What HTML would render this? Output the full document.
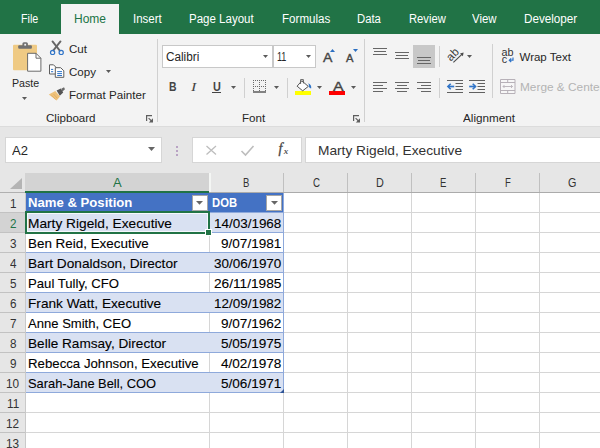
<!DOCTYPE html>
<html><head><meta charset="utf-8"><title>Excel</title>
<style>
html,body{margin:0;padding:0;}
body{width:600px;height:448px;overflow:hidden;position:relative;background:#fff;font-family:"Liberation Sans",sans-serif;}
#app{position:absolute;left:0;top:0;width:600px;height:448px;overflow:hidden;}
.c{-webkit-text-stroke:0.1px #000;}
.sb{-webkit-text-stroke:0.35px #444;}
.t{position:absolute;white-space:nowrap;transform-origin:0 0;display:block;}
</style></head><body><div id="app">
<div style="position:absolute;left:0px;top:0px;width:600px;height:34px;background:#217346;"></div>
<div style="position:absolute;left:61px;top:4px;width:58px;height:30px;background:#f3f3f3;"></div>
<div style="position:absolute;left:0px;top:34px;width:600px;height:92px;background:#f3f3f3;"></div>
<div style="position:absolute;left:0px;top:126px;width:600px;height:1px;background:#dcdcdc;"></div>
<div style="position:absolute;left:0px;top:127px;width:600px;height:46px;background:#e6e6e6;"></div>
<span class="t" style="left:20.70px;top:13.00px;font-size:12px;line-height:12px;color:#ffffff;transform:scaleX(0.8929);">File</span>
<span class="t" style="left:74.00px;top:13.00px;font-size:12px;line-height:12px;color:#217346;">Home</span>
<span class="t" style="left:133.30px;top:13.00px;font-size:12px;line-height:12px;color:#ffffff;transform:scaleX(0.9567);">Insert</span>
<span class="t" style="left:189.30px;top:13.00px;font-size:12px;line-height:12px;color:#ffffff;transform:scaleX(0.9603);">Page Layout</span>
<span class="t" style="left:281.70px;top:13.00px;font-size:12px;line-height:12px;color:#ffffff;transform:scaleX(0.9660);">Formulas</span>
<span class="t" style="left:357.30px;top:13.00px;font-size:12px;line-height:12px;color:#ffffff;transform:scaleX(0.9419);">Data</span>
<span class="t" style="left:408.50px;top:13.00px;font-size:12px;line-height:12px;color:#ffffff;transform:scaleX(0.9346);">Review</span>
<span class="t" style="left:472.20px;top:13.00px;font-size:12px;line-height:12px;color:#ffffff;transform:scaleX(0.9507);">View</span>
<span class="t" style="left:524.10px;top:13.00px;font-size:12px;line-height:12px;color:#ffffff;transform:scaleX(0.9735);">Developer</span>
<span class="t" style="left:68.75px;top:44.00px;font-size:11.5px;line-height:11.5px;color:#262626;transform:scaleX(1.0070);">Cut</span>
<span class="t" style="left:68.75px;top:67.00px;font-size:11.5px;line-height:11.5px;color:#262626;transform:scaleX(1.0047);">Copy</span>
<span class="t" style="left:69.00px;top:90.00px;font-size:11.5px;line-height:11.5px;color:#262626;transform:scaleX(1.0099);">Format Painter</span>
<span class="t" style="left:11.60px;top:78.00px;font-size:11.5px;line-height:11.5px;color:#262626;transform:scaleX(0.9260);">Paste</span>
<span class="t" style="left:45.70px;top:113.00px;font-size:11px;line-height:11px;color:#262626;transform:scaleX(1.0525);">Clipboard</span>
<svg style="position:absolute;left:22px;top:97px" width="5" height="3" viewBox="0 0 5 3"><path d="M0 0H5L2.5 3Z" fill="#5a5a5a"/></svg>
<svg style="position:absolute;left:106px;top:70px" width="5" height="3" viewBox="0 0 5 3"><path d="M0 0H5L2.5 3Z" fill="#5a5a5a"/></svg>
<div style="position:absolute;left:157px;top:39px;width:1px;height:83px;background:#d0d0d0;"></div>
<div style="position:absolute;left:364px;top:39px;width:1px;height:83px;background:#d0d0d0;"></div>
<div style="position:absolute;left:162px;top:45px;width:111px;height:23px;background:#fff;border:1px solid #c8c8c8;box-sizing:border-box;"></div>
<div style="position:absolute;left:273px;top:45px;width:43px;height:23px;background:#fff;border:1px solid #c8c8c8;box-sizing:border-box;"></div>
<span class="t" style="left:165.50px;top:51.00px;font-size:12px;line-height:12px;color:#262626;transform:scaleX(0.9779);">Calibri</span>
<span class="t" style="left:277.20px;top:51.00px;font-size:12px;line-height:12px;color:#262626;transform:scaleX(0.7520);">11</span>
<svg style="position:absolute;left:263px;top:55px" width="5" height="3" viewBox="0 0 5 3"><path d="M0 0H5L2.5 3Z" fill="#5a5a5a"/></svg>
<svg style="position:absolute;left:306px;top:55px" width="5" height="3" viewBox="0 0 5 3"><path d="M0 0H5L2.5 3Z" fill="#5a5a5a"/></svg>
<span class="t" style="left:168.60px;top:81.00px;font-size:12.5px;line-height:12.5px;color:#444;font-weight:bold;transform:scaleX(0.8333);">B</span>
<span class="t" style="left:191.15px;top:80.00px;font-size:13.5px;line-height:13.5px;color:#444;font-style:italic;font-family:'Liberation Serif',serif;transform:scaleX(1.1810);">I</span>
<span class="t" style="left:212.60px;top:81.00px;font-size:12px;line-height:12px;color:#444;font-weight:bold;transform:scaleX(0.9043);">U</span>
<div style="position:absolute;left:212px;top:91.5px;width:9px;height:1px;background:#444;"></div>
<svg style="position:absolute;left:231px;top:86px" width="5" height="3" viewBox="0 0 5 3"><path d="M0 0H5L2.5 3Z" fill="#5a5a5a"/></svg>
<div style="position:absolute;left:244px;top:78px;width:1px;height:20px;background:#d0d0d0;"></div>
<div style="position:absolute;left:287px;top:78px;width:1px;height:20px;background:#d0d0d0;"></div>
<svg style="position:absolute;left:274px;top:86px" width="5" height="3" viewBox="0 0 5 3"><path d="M0 0H5L2.5 3Z" fill="#5a5a5a"/></svg>
<svg style="position:absolute;left:317px;top:86px" width="5" height="3" viewBox="0 0 5 3"><path d="M0 0H5L2.5 3Z" fill="#5a5a5a"/></svg>
<svg style="position:absolute;left:351.3px;top:86px" width="5" height="3" viewBox="0 0 5 3"><path d="M0 0H5L2.5 3Z" fill="#5a5a5a"/></svg>
<span class="t" style="left:241.50px;top:113.00px;font-size:11px;line-height:11px;color:#262626;transform:scaleX(1.0545);">Font</span>
<span class="t" style="left:462.50px;top:113.00px;font-size:11px;line-height:11px;color:#262626;transform:scaleX(1.0639);">Alignment</span>
<div style="position:absolute;left:295px;top:91px;width:16px;height:4px;background:#ffff00;"></div>
<div style="position:absolute;left:329px;top:91px;width:16px;height:4px;background:#ff0000;"></div>
<span class="t sb" style="left:332.60px;top:80.00px;font-size:13.5px;line-height:13.5px;color:#444;transform:scaleX(1.1778);">A</span>
<span class="t sb" style="left:322.50px;top:51.00px;font-size:13px;line-height:13px;color:#444;transform:scaleX(1.0857);">A</span>
<span class="t sb" style="left:345.75px;top:53.00px;font-size:10.5px;line-height:10.5px;color:#444;transform:scaleX(1.0643);">A</span>
<svg style="position:absolute;left:330px;top:48.5px" width="5" height="3" viewBox="0 0 5 3"><path d="M0 3H5L2.5 0Z" fill="#2b6fc2"/></svg>
<svg style="position:absolute;left:353px;top:48.5px" width="5" height="3" viewBox="0 0 5 3"><path d="M0 0H5L2.5 3Z" fill="#2b6fc2"/></svg>
<div style="position:absolute;left:373px;top:48px;width:14px;height:1px;background:#666;"></div>
<div style="position:absolute;left:374px;top:51px;width:12px;height:1px;background:#666;"></div>
<div style="position:absolute;left:373px;top:54px;width:14px;height:1px;background:#666;"></div>
<div style="position:absolute;left:395px;top:52px;width:14px;height:1px;background:#666;"></div>
<div style="position:absolute;left:396px;top:55px;width:12px;height:1px;background:#666;"></div>
<div style="position:absolute;left:395px;top:58px;width:14px;height:1px;background:#666;"></div>
<div style="position:absolute;left:413px;top:45px;width:22px;height:23px;background:#c8c8c8;"></div>
<div style="position:absolute;left:417px;top:57px;width:14px;height:1px;background:#666;"></div>
<div style="position:absolute;left:418px;top:60px;width:12px;height:1px;background:#666;"></div>
<div style="position:absolute;left:417px;top:63px;width:14px;height:1px;background:#666;"></div>
<div style="position:absolute;left:373px;top:82px;width:14px;height:1px;background:#666;"></div>
<div style="position:absolute;left:373px;top:85px;width:10px;height:1px;background:#666;"></div>
<div style="position:absolute;left:373px;top:88px;width:14px;height:1px;background:#666;"></div>
<div style="position:absolute;left:373px;top:91px;width:10px;height:1px;background:#666;"></div>
<div style="position:absolute;left:395px;top:82px;width:14px;height:1px;background:#666;"></div>
<div style="position:absolute;left:397px;top:85px;width:10px;height:1px;background:#666;"></div>
<div style="position:absolute;left:395px;top:88px;width:14px;height:1px;background:#666;"></div>
<div style="position:absolute;left:397px;top:91px;width:10px;height:1px;background:#666;"></div>
<div style="position:absolute;left:417px;top:82px;width:14px;height:1px;background:#666;"></div>
<div style="position:absolute;left:421px;top:85px;width:10px;height:1px;background:#666;"></div>
<div style="position:absolute;left:417px;top:88px;width:14px;height:1px;background:#666;"></div>
<div style="position:absolute;left:421px;top:91px;width:10px;height:1px;background:#666;"></div>
<div style="position:absolute;left:439px;top:46px;width:1px;height:21px;background:#d0d0d0;"></div>
<div style="position:absolute;left:439px;top:78px;width:1px;height:20px;background:#d0d0d0;"></div>
<div style="position:absolute;left:492px;top:44px;width:1px;height:54px;background:#d0d0d0;"></div>
<svg style="position:absolute;left:467px;top:55px" width="5" height="3" viewBox="0 0 5 3"><path d="M0 0H5L2.5 3Z" fill="#5a5a5a"/></svg>
<span class="t" style="left:519.50px;top:52.00px;font-size:11.5px;line-height:11.5px;color:#262626;">Wrap Text</span>
<span class="t" style="left:519.50px;top:82.00px;font-size:11.5px;line-height:11.5px;color:#b4b4b4;transform:scaleX(1.0293);">Merge &amp; Center</span>
<div style="position:absolute;left:5px;top:137px;width:157px;height:26px;background:#fff;border:1px solid #d6d6d6;box-sizing:border-box;"></div>
<div style="position:absolute;left:192px;top:137px;width:110px;height:26px;background:#fff;border:1px solid #d6d6d6;box-sizing:border-box;"></div>
<div style="position:absolute;left:305px;top:137px;width:300px;height:26px;background:#fff;border:1px solid #d6d6d6;box-sizing:border-box;"></div>
<span class="t" style="left:12.30px;top:145.00px;font-size:12px;line-height:12px;color:#262626;transform:scaleX(1.0872);">A2</span>
<svg style="position:absolute;left:147.8px;top:147px" width="7" height="4" viewBox="0 0 7 4"><path d="M0 0H7L3.5 4Z" fill="#666"/></svg>
<div style="position:absolute;left:176px;top:145.5px;width:2px;height:2px;background:#b9a3c4;"></div>
<div style="position:absolute;left:176px;top:149.5px;width:2px;height:2px;background:#b9a3c4;"></div>
<div style="position:absolute;left:176px;top:153.5px;width:2px;height:2px;background:#b9a3c4;"></div>
<span class="t" style="left:317.50px;top:144.00px;font-size:13px;line-height:13px;color:#333;transform:scaleX(1.0549);">Marty Rigeld, Executive</span>
<div style="position:absolute;left:0px;top:173px;width:600px;height:19px;background:#e6e6e6;"></div>
<div style="position:absolute;left:0px;top:192px;width:25px;height:256px;background:#e6e6e6;"></div>
<div style="position:absolute;left:26px;top:193px;width:574px;height:255px;background:#fff;"></div>
<div style="position:absolute;left:26px;top:192px;width:574px;height:1px;background:#ababab;"></div>
<div style="position:absolute;left:25px;top:173px;width:184px;height:19px;background:#d3d3d3;"></div>
<div style="position:absolute;left:25px;top:191px;width:184px;height:2px;background:#217346;"></div>
<div style="position:absolute;left:0px;top:192px;width:25px;height:1px;background:#b0b0b0;"></div>
<div style="position:absolute;left:0px;top:213px;width:25px;height:20px;background:#d3d3d3;"></div>
<div style="position:absolute;left:209px;top:193px;width:1px;height:255px;background:#d6d6d6;"></div>
<div style="position:absolute;left:283px;top:193px;width:1px;height:255px;background:#d6d6d6;"></div>
<div style="position:absolute;left:347px;top:193px;width:1px;height:255px;background:#d6d6d6;"></div>
<div style="position:absolute;left:411px;top:193px;width:1px;height:255px;background:#d6d6d6;"></div>
<div style="position:absolute;left:475px;top:193px;width:1px;height:255px;background:#d6d6d6;"></div>
<div style="position:absolute;left:539px;top:193px;width:1px;height:255px;background:#d6d6d6;"></div>
<div style="position:absolute;left:603px;top:193px;width:1px;height:255px;background:#d6d6d6;"></div>
<div style="position:absolute;left:26px;top:212px;width:574px;height:1px;background:#d6d6d6;"></div>
<div style="position:absolute;left:26px;top:232px;width:574px;height:1px;background:#d6d6d6;"></div>
<div style="position:absolute;left:26px;top:252px;width:574px;height:1px;background:#d6d6d6;"></div>
<div style="position:absolute;left:26px;top:272px;width:574px;height:1px;background:#d6d6d6;"></div>
<div style="position:absolute;left:26px;top:292px;width:574px;height:1px;background:#d6d6d6;"></div>
<div style="position:absolute;left:26px;top:312px;width:574px;height:1px;background:#d6d6d6;"></div>
<div style="position:absolute;left:26px;top:332px;width:574px;height:1px;background:#d6d6d6;"></div>
<div style="position:absolute;left:26px;top:352px;width:574px;height:1px;background:#d6d6d6;"></div>
<div style="position:absolute;left:26px;top:372px;width:574px;height:1px;background:#d6d6d6;"></div>
<div style="position:absolute;left:26px;top:392px;width:574px;height:1px;background:#d6d6d6;"></div>
<div style="position:absolute;left:26px;top:412px;width:574px;height:1px;background:#d6d6d6;"></div>
<div style="position:absolute;left:26px;top:432px;width:574px;height:1px;background:#d6d6d6;"></div>
<div style="position:absolute;left:26px;top:452px;width:574px;height:1px;background:#d6d6d6;"></div>
<div style="position:absolute;left:26px;top:472px;width:574px;height:1px;background:#d6d6d6;"></div>
<div style="position:absolute;left:283px;top:173px;width:1px;height:19px;background:#c0c0c0;"></div>
<div style="position:absolute;left:347px;top:173px;width:1px;height:19px;background:#c0c0c0;"></div>
<div style="position:absolute;left:411px;top:173px;width:1px;height:19px;background:#c0c0c0;"></div>
<div style="position:absolute;left:475px;top:173px;width:1px;height:19px;background:#c0c0c0;"></div>
<div style="position:absolute;left:539px;top:173px;width:1px;height:19px;background:#c0c0c0;"></div>
<div style="position:absolute;left:209px;top:173px;width:2px;height:19px;background:#f4f6f4;"></div>
<div style="position:absolute;left:0px;top:212px;width:25px;height:1px;background:#c2c2c2;"></div>
<div style="position:absolute;left:0px;top:232px;width:25px;height:1px;background:#c2c2c2;"></div>
<div style="position:absolute;left:0px;top:252px;width:25px;height:1px;background:#c2c2c2;"></div>
<div style="position:absolute;left:0px;top:272px;width:25px;height:1px;background:#c2c2c2;"></div>
<div style="position:absolute;left:0px;top:292px;width:25px;height:1px;background:#c2c2c2;"></div>
<div style="position:absolute;left:0px;top:312px;width:25px;height:1px;background:#c2c2c2;"></div>
<div style="position:absolute;left:0px;top:332px;width:25px;height:1px;background:#c2c2c2;"></div>
<div style="position:absolute;left:0px;top:352px;width:25px;height:1px;background:#c2c2c2;"></div>
<div style="position:absolute;left:0px;top:372px;width:25px;height:1px;background:#c2c2c2;"></div>
<div style="position:absolute;left:0px;top:392px;width:25px;height:1px;background:#c2c2c2;"></div>
<div style="position:absolute;left:0px;top:412px;width:25px;height:1px;background:#c2c2c2;"></div>
<div style="position:absolute;left:0px;top:432px;width:25px;height:1px;background:#c2c2c2;"></div>
<div style="position:absolute;left:0px;top:452px;width:25px;height:1px;background:#c2c2c2;"></div>
<div style="position:absolute;left:0px;top:472px;width:25px;height:1px;background:#c2c2c2;"></div>
<div style="position:absolute;left:25px;top:193px;width:1px;height:255px;background:#c9c9c9;"></div>
<svg style="position:absolute;left:9px;top:178px" width="14" height="12" viewBox="0 0 14 12"><path d="M13 0V11H1Z" fill="#b4b4b4"/></svg>
<span class="t" style="left:113.05px;top:177.00px;font-size:12.5px;line-height:12.5px;color:#217346;transform:scaleX(1.0388);">A</span>
<span class="t" style="left:243.40px;top:177.00px;font-size:12.5px;line-height:12.5px;color:#333;transform:scaleX(0.7642);">B</span>
<span class="t" style="left:313.00px;top:177.00px;font-size:12.5px;line-height:12.5px;color:#333;transform:scaleX(0.7778);">C</span>
<span class="t" style="left:376.10px;top:177.00px;font-size:12.5px;line-height:12.5px;color:#333;transform:scaleX(0.8667);">D</span>
<span class="t" style="left:440.20px;top:177.00px;font-size:12.5px;line-height:12.5px;color:#333;transform:scaleX(0.7642);">E</span>
<span class="t" style="left:505.10px;top:177.00px;font-size:12.5px;line-height:12.5px;color:#333;transform:scaleX(0.7607);">F</span>
<span class="t" style="left:568.20px;top:177.00px;font-size:12.5px;line-height:12.5px;color:#333;transform:scaleX(0.8615);">G</span>
<span class="t" style="left:9.73px;top:197.80px;font-size:12.5px;line-height:12.5px;color:#333;transform:scaleX(0.9337);">1</span>
<span class="t" style="left:9.73px;top:217.80px;font-size:12.5px;line-height:12.5px;color:#217346;transform:scaleX(0.9337);">2</span>
<span class="t" style="left:9.73px;top:237.80px;font-size:12.5px;line-height:12.5px;color:#333;transform:scaleX(0.9337);">3</span>
<span class="t" style="left:9.73px;top:257.80px;font-size:12.5px;line-height:12.5px;color:#333;transform:scaleX(0.9337);">4</span>
<span class="t" style="left:9.73px;top:277.80px;font-size:12.5px;line-height:12.5px;color:#333;transform:scaleX(0.9337);">5</span>
<span class="t" style="left:9.73px;top:297.80px;font-size:12.5px;line-height:12.5px;color:#333;transform:scaleX(0.9337);">6</span>
<span class="t" style="left:9.73px;top:317.80px;font-size:12.5px;line-height:12.5px;color:#333;transform:scaleX(0.9337);">7</span>
<span class="t" style="left:9.73px;top:337.80px;font-size:12.5px;line-height:12.5px;color:#333;transform:scaleX(0.9337);">8</span>
<span class="t" style="left:9.73px;top:357.80px;font-size:12.5px;line-height:12.5px;color:#333;transform:scaleX(0.9337);">9</span>
<span class="t" style="left:6.46px;top:377.80px;font-size:12.5px;line-height:12.5px;color:#333;transform:scaleX(0.9421);">10</span>
<span class="t" style="left:6.90px;top:397.80px;font-size:12.5px;line-height:12.5px;color:#333;transform:scaleX(0.9386);">11</span>
<span class="t" style="left:6.46px;top:417.80px;font-size:12.5px;line-height:12.5px;color:#333;transform:scaleX(0.9421);">12</span>
<span class="t" style="left:6.46px;top:437.80px;font-size:12.5px;line-height:12.5px;color:#333;transform:scaleX(0.9421);">13</span>
<div style="position:absolute;left:26px;top:193px;width:258px;height:19px;background:#4472c4;"></div>
<div style="position:absolute;left:26px;top:213px;width:258px;height:19px;background:#d9e1f2;"></div>
<div style="position:absolute;left:26px;top:232px;width:258px;height:1px;background:#8ea9db;"></div>
<div style="position:absolute;left:26px;top:252px;width:258px;height:1px;background:#8ea9db;"></div>
<div style="position:absolute;left:26px;top:253px;width:258px;height:19px;background:#d9e1f2;"></div>
<div style="position:absolute;left:26px;top:272px;width:258px;height:1px;background:#8ea9db;"></div>
<div style="position:absolute;left:26px;top:292px;width:258px;height:1px;background:#8ea9db;"></div>
<div style="position:absolute;left:26px;top:293px;width:258px;height:19px;background:#d9e1f2;"></div>
<div style="position:absolute;left:26px;top:312px;width:258px;height:1px;background:#8ea9db;"></div>
<div style="position:absolute;left:26px;top:332px;width:258px;height:1px;background:#8ea9db;"></div>
<div style="position:absolute;left:26px;top:333px;width:258px;height:19px;background:#d9e1f2;"></div>
<div style="position:absolute;left:26px;top:352px;width:258px;height:1px;background:#8ea9db;"></div>
<div style="position:absolute;left:26px;top:372px;width:258px;height:1px;background:#8ea9db;"></div>
<div style="position:absolute;left:26px;top:373px;width:258px;height:19px;background:#d9e1f2;"></div>
<div style="position:absolute;left:26px;top:392px;width:258px;height:1px;background:#8ea9db;"></div>
<div style="position:absolute;left:26px;top:212px;width:258px;height:1px;background:#8ea9db;"></div>
<div style="position:absolute;left:283px;top:193px;width:1px;height:200px;background:#8ea9db;"></div>
<span class="t" style="left:28.40px;top:196.30px;font-size:13px;line-height:13px;color:#fff;font-weight:bold;transform:scaleX(1.0102);">Name &amp; Position</span>
<span class="t" style="left:212.30px;top:196.30px;font-size:13px;line-height:13px;color:#fff;font-weight:bold;transform:scaleX(0.8658);">DOB</span>
<div style="position:absolute;left:191.5px;top:194.5px;width:16px;height:16px;background:#fff;border:1px solid #a6a6a6;box-sizing:border-box;"></div>
<svg style="position:absolute;left:196.0px;top:201.0px" width="7" height="3.8" viewBox="0 0 7 3.8"><path d="M0 0H7L3.5 3.8Z" fill="#666"/></svg>
<div style="position:absolute;left:266px;top:194.5px;width:16px;height:16px;background:#fff;border:1px solid #a6a6a6;box-sizing:border-box;"></div>
<svg style="position:absolute;left:270.5px;top:201.0px" width="7" height="3.8" viewBox="0 0 7 3.8"><path d="M0 0H7L3.5 3.8Z" fill="#666"/></svg>
<span class="t c" style="left:28.40px;top:217.00px;font-size:13px;line-height:13px;color:#000;transform:scaleX(1.0542);">Marty Rigeld, Executive</span>
<span class="t c" style="left:213.60px;top:217.00px;font-size:13px;line-height:13px;color:#000;transform:scaleX(1.0349);">14/03/1968</span>
<span class="t c" style="left:28.40px;top:237.00px;font-size:13px;line-height:13px;color:#000;transform:scaleX(1.0322);">Ben Reid, Executive</span>
<span class="t c" style="left:220.60px;top:237.00px;font-size:13px;line-height:13px;color:#000;transform:scaleX(1.0436);">9/07/1981</span>
<span class="t c" style="left:28.40px;top:257.00px;font-size:13px;line-height:13px;color:#000;transform:scaleX(1.0507);">Bart Donaldson, Director</span>
<span class="t c" style="left:213.60px;top:257.00px;font-size:13px;line-height:13px;color:#000;transform:scaleX(1.0349);">30/06/1970</span>
<span class="t c" style="left:28.40px;top:277.00px;font-size:13px;line-height:13px;color:#000;transform:scaleX(1.0108);">Paul Tully, CFO</span>
<span class="t c" style="left:213.60px;top:277.00px;font-size:13px;line-height:13px;color:#000;transform:scaleX(1.0511);">26/11/1985</span>
<span class="t c" style="left:28.40px;top:297.00px;font-size:13px;line-height:13px;color:#000;transform:scaleX(1.0511);">Frank Watt, Executive</span>
<span class="t c" style="left:213.60px;top:297.00px;font-size:13px;line-height:13px;color:#000;transform:scaleX(1.0349);">12/09/1982</span>
<span class="t c" style="left:28.40px;top:317.00px;font-size:13px;line-height:13px;color:#000;transform:scaleX(1.0046);">Anne Smith, CEO</span>
<span class="t c" style="left:220.60px;top:317.00px;font-size:13px;line-height:13px;color:#000;transform:scaleX(1.0436);">9/07/1962</span>
<span class="t c" style="left:28.40px;top:337.00px;font-size:13px;line-height:13px;color:#000;transform:scaleX(1.0462);">Belle Ramsay, Director</span>
<span class="t c" style="left:220.60px;top:337.00px;font-size:13px;line-height:13px;color:#000;transform:scaleX(1.0436);">5/05/1975</span>
<span class="t c" style="left:28.40px;top:357.00px;font-size:13px;line-height:13px;color:#000;transform:scaleX(1.0177);">Rebecca Johnson, Executive</span>
<span class="t c" style="left:220.60px;top:357.00px;font-size:13px;line-height:13px;color:#000;transform:scaleX(1.0436);">4/02/1978</span>
<span class="t c" style="left:28.40px;top:377.00px;font-size:13px;line-height:13px;color:#000;transform:scaleX(0.9901);">Sarah-Jane Bell, COO</span>
<span class="t c" style="left:220.60px;top:377.00px;font-size:13px;line-height:13px;color:#000;transform:scaleX(1.0436);">5/06/1971</span>
<div style="position:absolute;left:25px;top:211px;width:185px;height:23px;border:2px solid #217346;box-sizing:border-box;box-shadow:inset 0 0 0 1px rgba(255,255,255,.75);"></div>
<div style="position:absolute;left:205px;top:229px;width:5px;height:5px;background:#217346;border:1px solid #fff;box-sizing:content-box;"></div>
<svg style="position:absolute;left:280px;top:389px" width="4" height="4" viewBox="0 0 4 4"><path d="M4 0V4H0Z" fill="#2f5597"/></svg>
<svg style="position:absolute;left:0;top:0" width="600" height="448" viewBox="0 0 600 448"><rect x="13" y="44.8" width="24" height="25.4" fill="#efca84" rx="1"/><rect x="18.2" y="45.2" width="13.7" height="3.5" fill="#707070" rx="1"/><rect x="22.4" y="42.2" width="5.5" height="4.5" fill="#707070" rx="1.5"/><rect x="24.3" y="43.8" width="1.8" height="1.8" fill="#f3f3f3" /><path d="M27.6 53.3H36L40.9 58.2V71.2H27.6Z" fill="#ffffff" stroke="#6a6a6a" stroke-width="1" stroke-linejoin="round"/><path d="M36 53.3V58.2H40.9" fill="none" stroke="#6a6a6a" stroke-width="1" /><path d="M52.5 41.4L59.6 50.4" fill="none" stroke="#666" stroke-width="1.9" stroke-linecap="round"/><path d="M60.5 41.4L53.4 50.4" fill="none" stroke="#666" stroke-width="1.9" stroke-linecap="round"/><circle cx="52.6" cy="52.4" r="2.1" fill="none" stroke="#2f74c8" stroke-width="1.2"/><circle cx="61.2" cy="52.4" r="2.1" fill="none" stroke="#2f74c8" stroke-width="1.2"/><path d="M49.5 64.8H53.5L56 67.3V74H49.5Z" fill="#fff" stroke="#5e5e5e" stroke-width="1" /><path d="M51 69.4H53.2M51 71.7H53.2" fill="none" stroke="#2f74c8" stroke-width="1" /><path d="M55.3 67.7H60.7L63.8 70.8V77.3H55.3Z" fill="#fff" stroke="#5e5e5e" stroke-width="1" /><path d="M57.2 71.6H62M57.2 73.6H62M57.2 75.5H62" fill="none" stroke="#2f74c8" stroke-width="1" /><path d="M61.3 88.8L64 87.2L65 89.2L62.4 91.6Z" fill="#6a6a6a" /><path d="M56.6 90.6L60.8 88.6L63.2 92.6L59.8 95.8Z" fill="#555" /><path d="M55.3 91L60 96.4L56.6 100.6L48.8 94.6Z" fill="#efc27a" /><path d="M51.5 95.2L55.5 99.5M53.5 94L57.2 98.2" fill="none" stroke="#dba85e" stroke-width="0.7" /><path d="M253.5 80V91" fill="none" stroke="#6a6a6a" stroke-width="1" stroke-dasharray="1 1"/><path d="M259.5 80V91" fill="none" stroke="#6a6a6a" stroke-width="1" stroke-dasharray="1 1"/><path d="M265.5 80V91" fill="none" stroke="#6a6a6a" stroke-width="1" stroke-dasharray="1 1"/><path d="M253 80.5H266" fill="none" stroke="#6a6a6a" stroke-width="1" stroke-dasharray="1 1"/><path d="M253 86.5H266" fill="none" stroke="#6a6a6a" stroke-width="1" stroke-dasharray="1 1"/><path d="M253 92H266" fill="none" stroke="#444" stroke-width="1.3" /><path d="M301.8 80.8L308.3 86.4L302.7 90.8L297.1 86.2Z" fill="#fff" stroke="#555" stroke-width="1" stroke-linejoin="round"/><path d="M300.6 84V79.6H303.4V83.4" fill="none" stroke="#555" stroke-width="0.9" /><path d="M308.3 83.2Q312 85.2 311.1 88.6Q308.4 87.6 308.9 85Z" fill="#2f74c8" /><path d="M152 115.6H146.6V121.1" fill="none" stroke="#5e5e5e" stroke-width="1.2" /><path d="M148.6 118.1L152 121.5" fill="none" stroke="#5e5e5e" stroke-width="1.1" /><path d="M153 118.3V122.5H148.8Z" fill="#5e5e5e" /><path d="M359 115.6H353.6V121.1" fill="none" stroke="#5e5e5e" stroke-width="1.2" /><path d="M355.6 118.1L359 121.5" fill="none" stroke="#5e5e5e" stroke-width="1.1" /><path d="M360 118.3V122.5H355.8Z" fill="#5e5e5e" /><text x="452.9" y="58.1" font-size="11.5" fill="#3a3a3a" text-anchor="middle" transform="rotate(-45 452.9 54.7)" font-family="Liberation Sans, sans-serif">ab</text><path d="M453.4 62.4L462.4 53.8" fill="none" stroke="#4a4a4a" stroke-width="1.1" /><path d="M463.6 52.6L460 53.4L462.9 56.2Z" fill="#4a4a4a" /><path d="M447 80.5H463M447 92.5H463M455.5 83.5H463M455.5 86.5H463M455.5 89.5H463" fill="none" stroke="#606060" stroke-width="1" /><path d="M448.2 86.5H454.2" fill="none" stroke="#2f74c8" stroke-width="1.7" /><path d="M450.7 83.7L447.9 86.5L450.7 89.3" fill="none" stroke="#2f74c8" stroke-width="1.6" stroke-linejoin="miter"/><path d="M469 80.5H485M469 92.5H485M477.5 83.5H485M477.5 86.5H485M477.5 89.5H485" fill="none" stroke="#606060" stroke-width="1" /><path d="M469.2 86.5H475.2" fill="none" stroke="#2f74c8" stroke-width="1.7" /><path d="M472.7 83.7L475.5 86.5L472.7 89.3" fill="none" stroke="#2f74c8" stroke-width="1.6" stroke-linejoin="miter"/><text x="501.6" y="55.6" font-size="10.8" fill="#333" font-family="Liberation Sans, sans-serif">ab</text><text x="501.8" y="62.6" font-size="10.8" fill="#333" font-family="Liberation Sans, sans-serif">c</text><path d="M513 57.6V60.2H509.6M511.2 58.4L509.3 60.2L511.2 62" fill="none" stroke="#2f74c8" stroke-width="1.2" /><path d="M500.5 79.5H515V93.5H500.5Z" fill="#f7f7f7" stroke="#b7b1b8" stroke-width="1" /><path d="M500.5 82.5H515M500.5 90.5H515M507.7 79.5V82.5M507.7 90.5V93.5" fill="none" stroke="#b7b1b8" stroke-width="1" /><path d="M503 86.5H512.5M504.5 85L503 86.5L504.5 88M511 85L512.5 86.5L511 88" fill="none" stroke="#b7b1b8" stroke-width="0.9" /><path d="M206.5 146L216 154.5M216 146L206.5 154.5" fill="none" stroke="#bdbdbd" stroke-width="1.3" /><path d="M241.5 151L245.5 155L253.5 146" fill="none" stroke="#bdbdbd" stroke-width="1.6" /><text x="278.6" y="153.4" font-size="13.8" font-style="italic" fill="#444" stroke="#444" stroke-width="0.3" font-family="Liberation Serif, serif">f</text><text x="283.8" y="154.2" font-size="9" font-style="italic" font-weight="bold" fill="#555" font-family="Liberation Serif, serif">x</text></svg>
</div></body></html>
